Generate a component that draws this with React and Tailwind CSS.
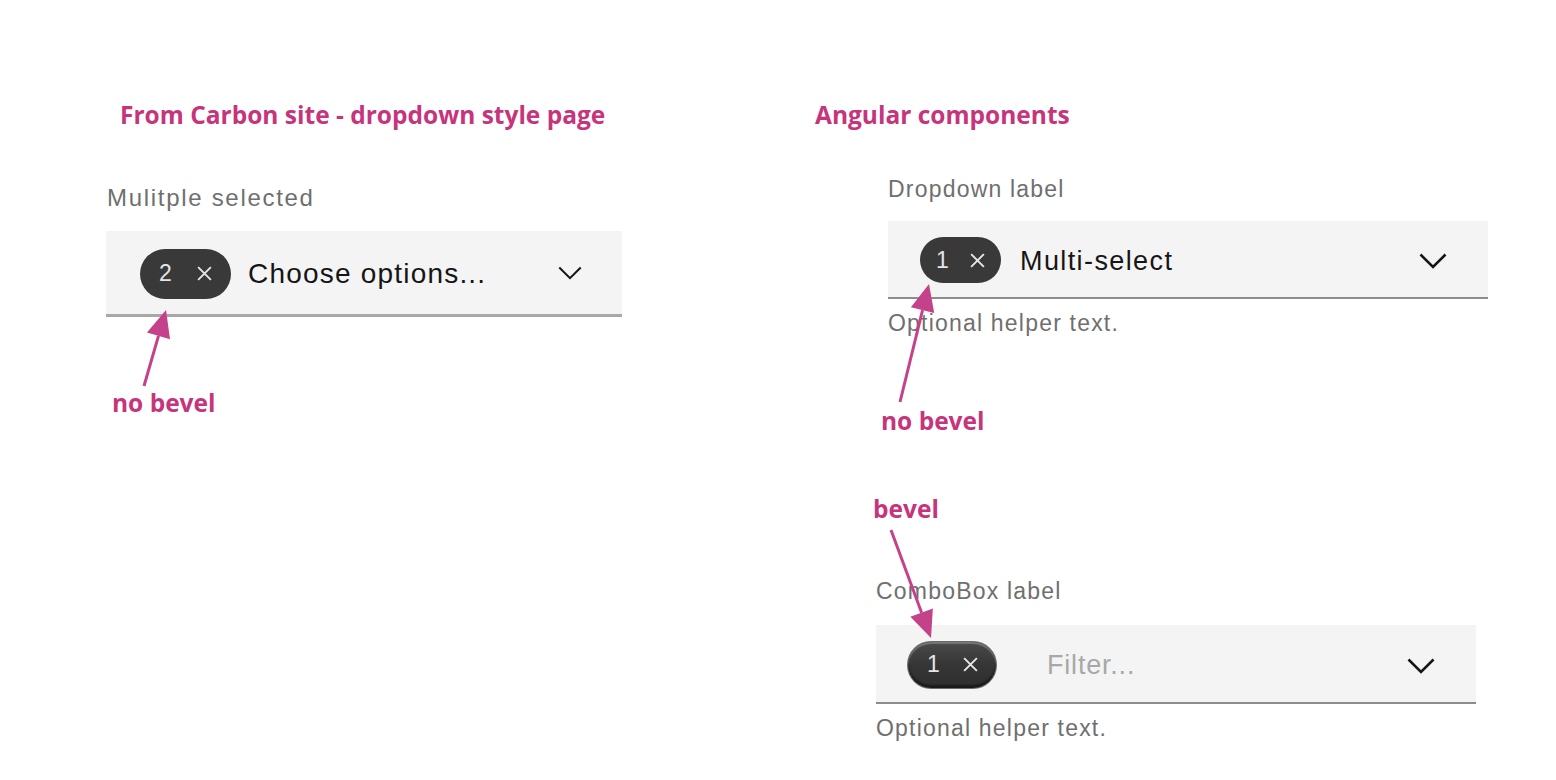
import React from 'react';

function Chevron({ w, h, stroke }) {
  return (
    <svg width={w} height={h} viewBox="0 0 28 16" fill="none" className="shrink-0">
      <path d="M1.5 1.5L14 14L26.5 1.5" stroke="#161616" strokeWidth={stroke} />
    </svg>
  );
}

function CloseX({ size }) {
  return (
    <svg width={size} height={size} viewBox="0 0 16 16" fill="none">
      <path d="M2 2L14 14M14 2L2 14" stroke="#e6e6e6" strokeWidth="1.8" />
    </svg>
  );
}

function Tag({ count, bevel, className }) {
  return (
    <div
      className={`flex items-center rounded-full bg-[#393939] text-[#e6e6e6] ${className} ${
        bevel
          ? 'bg-gradient-to-b from-[#4a4a4a] via-[#363636] to-[#2e2e2e] shadow-[inset_0_2px_1px_rgba(255,255,255,0.25),inset_0_-3px_2px_rgba(0,0,0,0.45),0_0_0_1px_#6a6a6a]'
          : ''
      }`}
    >
      <span className="text-[23px] leading-none">{count}</span>
      <CloseX size={17} />
    </div>
  );
}

function Arrow({ x1, y1, x2, y2 }) {
  const dx = x2 - x1;
  const dy = y2 - y1;
  const len = Math.hypot(dx, dy);
  const ux = dx / len;
  const uy = dy / len;
  const head = 27;
  const half = 12;
  const bx = x2 - ux * head;
  const by = y2 - uy * head;
  const pts = `${x2},${y2} ${bx - uy * half},${by + ux * half} ${bx + uy * half},${by - ux * half}`;
  return (
    <g>
      <line x1={x1} y1={y1} x2={bx} y2={by} stroke="#c4428a" strokeWidth="3" />
      <polygon points={pts} fill="#c4428a" />
    </g>
  );
}

const note = 'text-[24.5px] font-bold leading-[30px] text-[#c6357b]';
const noteFont = { fontFamily: '"Open Sans", sans-serif' };

export default function App() {
  return (
    <div
      className="relative w-[1556px] h-[780px] bg-white overflow-hidden"
      style={{ fontFamily: '"Liberation Sans", Arial, sans-serif' }}
    >
      <div className="flex">
        {/* left column */}
        <div className="w-[815px] shrink-0 pl-[106px] pt-[100px]">
          <h2 className={`ml-[14px] ${note}`} style={noteFont}>
            From Carbon site - dropdown style page
          </h2>
          <div className="mt-[54px] ml-px text-[24px] leading-[28px] tracking-[1.7px] text-[#6f6f6f]">Mulitple selected</div>
          <div className="mt-[19px] w-[516px] h-[86px] bg-[#f4f4f4] border-b-[3px] border-[#a8a8a8] flex items-center pl-[34px] pr-[40px]">
            <Tag count="2" className="w-[91px] h-[50px] pl-[19px] gap-[24px] mt-[2px]" />
            <span className="ml-[17px] mt-[3px] text-[28px] tracking-[1.2px] text-[#161616]">Choose options...</span>
            <span className="ml-auto">
              <Chevron w={24} h={14} stroke={2.4} />
            </span>
          </div>
          <div className={`mt-[71px] ml-[6px] ${note}`} style={noteFont}>
            no bevel
          </div>
        </div>

        {/* right column */}
        <div className="pt-[100px]">
          <h2 className={note} style={noteFont}>
            Angular components
          </h2>

          <div className="ml-[73px] mt-[45px]">
            <div className="text-[23px] leading-[28px] tracking-[1.2px] text-[#6f6f6f]">Dropdown label</div>
            <div className="mt-[18px] w-[600px] h-[78px] bg-[#f4f4f4] border-b-2 border-[#8d8d8d] flex items-center pt-[4px] pl-[32px] pr-[41px]">
              <Tag count="1" className="w-[81px] h-[46px] pl-[16px] gap-[20px] -mt-[2px]" />
              <span className="ml-[19px] text-[27px] tracking-[1.4px] text-[#161616]">Multi-select</span>
              <span className="ml-auto">
                <Chevron w={28} h={16} stroke={2.6} />
              </span>
            </div>
            <div className="mt-[10px] text-[23px] leading-[28px] tracking-[1.2px] text-[#6f6f6f]">Optional helper text.</div>
          </div>

          <div className={`ml-[66px] mt-[69px] ${note}`} style={noteFont}>
            no bevel
          </div>
          <div className={`ml-[58px] mt-[58px] ${note}`} style={noteFont}>
            bevel
          </div>

          <div className="ml-[61px] mt-[53px]">
            <div className="text-[23px] leading-[28px] tracking-[1.2px] text-[#6f6f6f]">ComboBox label</div>
            <div className="mt-[20px] w-[600px] h-[79px] bg-[#f4f4f4] border-b-2 border-[#8d8d8d] flex items-center pt-[4px] pl-[32px] pr-[41px]">
              <Tag bevel count="1" className="w-[88px] h-[46px] pl-[19px] gap-[22px] -mt-[2px]" />
              <span className="ml-[51px] text-[27px] tracking-[0.8px] text-[#a8a8a8]">Filter...</span>
              <span className="ml-auto">
                <Chevron w={28} h={16} stroke={2.6} />
              </span>
            </div>
            <div className="mt-[10px] text-[23px] leading-[28px] tracking-[1.2px] text-[#6f6f6f]">Optional helper text.</div>
          </div>
        </div>
      </div>

      {/* annotation arrows */}
      <svg className="absolute inset-0 pointer-events-none" width="1556" height="780">
        <Arrow x1={144} y1={386} x2={166} y2={310} />
        <Arrow x1={900} y1={402} x2={929} y2={284} />
        <Arrow x1={891} y1={530} x2={931} y2={638} />
      </svg>
    </div>
  );
}
